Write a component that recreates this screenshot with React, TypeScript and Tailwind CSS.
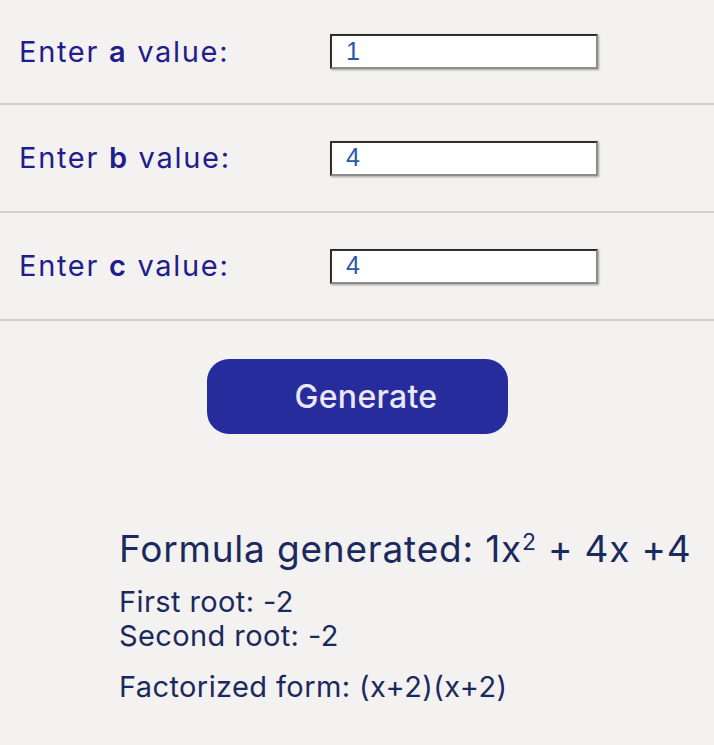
import { useState } from "react";

const labelFont = { fontFamily: "Inter, 'Noto Sans', sans-serif" };

function Row({ name, value, first }: { name: string; value: string; first?: boolean }) {
  return (
    <div
      className={`flex items-center border-b-2 border-[#d2d0cf] pl-[19px] ${first ? "h-[105px]" : "h-[108px]"}`}
    >
      <label className="w-[311px] text-[29px] leading-[36px] tracking-[1.7px] text-[#221c8c]" style={labelFont}>
        Enter <span className="font-semibold">{name}</span> value:
      </label>
      <input
        defaultValue={value}
        className="w-[268px] h-[35px] bg-white border-2 border-[#2e2e2e] border-b-[#8c8c8c] border-r-[#8c8c8c] shadow-[1px_1px_2px_rgba(0,0,0,0.35)] pl-[14px] text-[25px] text-[#2857b0] outline-none"
        style={{ fontFamily: "'Liberation Sans', Arial, sans-serif" }}
      />
    </div>
  );
}

export default function App() {
  const [shown] = useState(true);

  return (
    <div className="min-h-[745px] bg-[#f4f2f1]" style={labelFont}>
      <Row name="a" value="1" first />
      <Row name="b" value="4" />
      <Row name="c" value="4" />

      <div className="flex justify-center pt-[38px]">
        <button className="w-[301px] h-[75px] rounded-[22px] bg-[#272c9d] pl-[18px] text-[32px] tracking-[0.3px] font-medium text-[#e9e9f5]">
          Generate
        </button>
      </div>

      {shown && (
        <div className="pl-[119px] pt-[92px] text-[#1b2a5e]">
          <p className="text-[37px] leading-[45px] tracking-[0.8px]">
            Formula generated: 1x<sup className="text-[23px] relative -top-[12px]">2</sup> + 4x +4
          </p>
          <p className="mt-[14px] text-[29px] leading-[34px] tracking-[0.4px]">First root: -2</p>
          <p className="text-[29px] leading-[34px] tracking-[0.4px]">Second root: -2</p>
          <p className="mt-[17px] text-[29px] leading-[34px] tracking-[0.4px]">Factorized form: (x+2)(x+2)</p>
        </div>
      )}
    </div>
  );
}
